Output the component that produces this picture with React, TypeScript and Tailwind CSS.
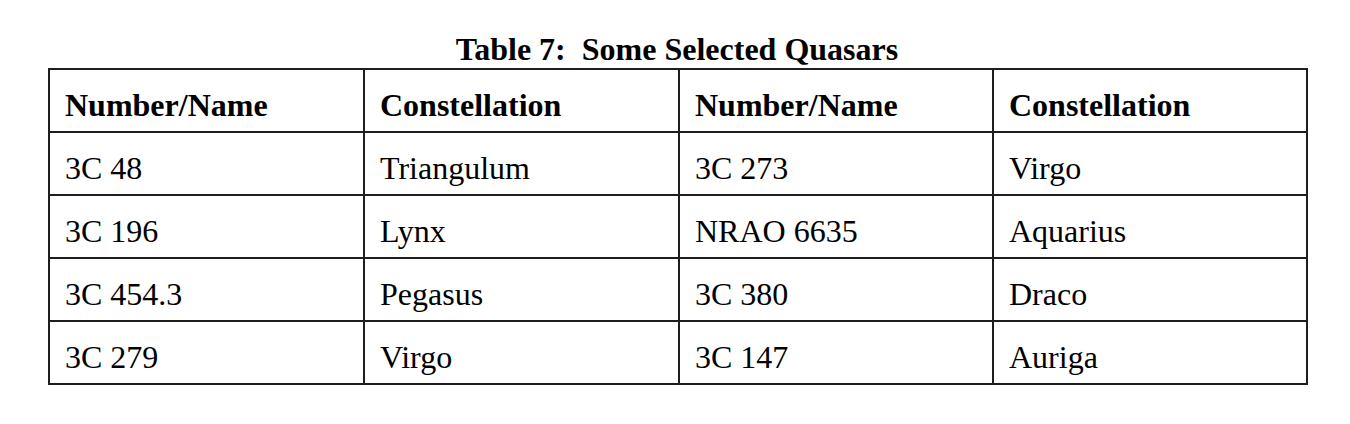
import React from "react";

const rows: [string, string, string, string][] = [
  ["3C 48", "Triangulum", "3C 273", "Virgo"],
  ["3C 196", "Lynx", "NRAO 6635", "Aquarius"],
  ["3C 454.3", "Pegasus", "3C 380", "Draco"],
  ["3C 279", "Virgo", "3C 147", "Auriga"],
];

const headers = ["Number/Name", "Constellation", "Number/Name", "Constellation"];

export default function App() {
  return (
    <div
      className="w-[1350px] h-[424px] bg-white text-black pl-[48px] pt-[31px]"
      style={{ fontFamily: '"Liberation Serif", "Times New Roman", serif' }}
    >
      <div className="w-[1258px] text-center font-bold text-[32px] leading-[36px] h-[37px] whitespace-pre">
        Table 7:  Some Selected Quasars
      </div>
      <table className="w-[1258px] table-fixed border-collapse border-2 border-[#1e1e1e]">
        <colgroup>
          <col className="w-[315px]" />
          <col className="w-[315px]" />
          <col className="w-[314px]" />
          <col className="w-[314px]" />
        </colgroup>
        <thead>
          <tr className="h-[63px]">
            {headers.map((h, i) => (
              <th
                key={i}
                className="border-2 border-[#1e1e1e] text-left align-middle font-bold text-[32px] leading-[36px] pl-[15px] pt-[8px] pb-0"
              >
                {h}
              </th>
            ))}
          </tr>
        </thead>
        <tbody>
          {rows.map((r, ri) => (
            <tr key={ri} className="h-[63px]">
              {r.map((c, ci) => (
                <td
                  key={ci}
                  className="border-2 border-[#1e1e1e] text-left align-middle text-[32px] leading-[36px] pl-[15px] pt-[9px] pb-0"
                >
                  {c}
                </td>
              ))}
            </tr>
          ))}
        </tbody>
      </table>
    </div>
  );
}
